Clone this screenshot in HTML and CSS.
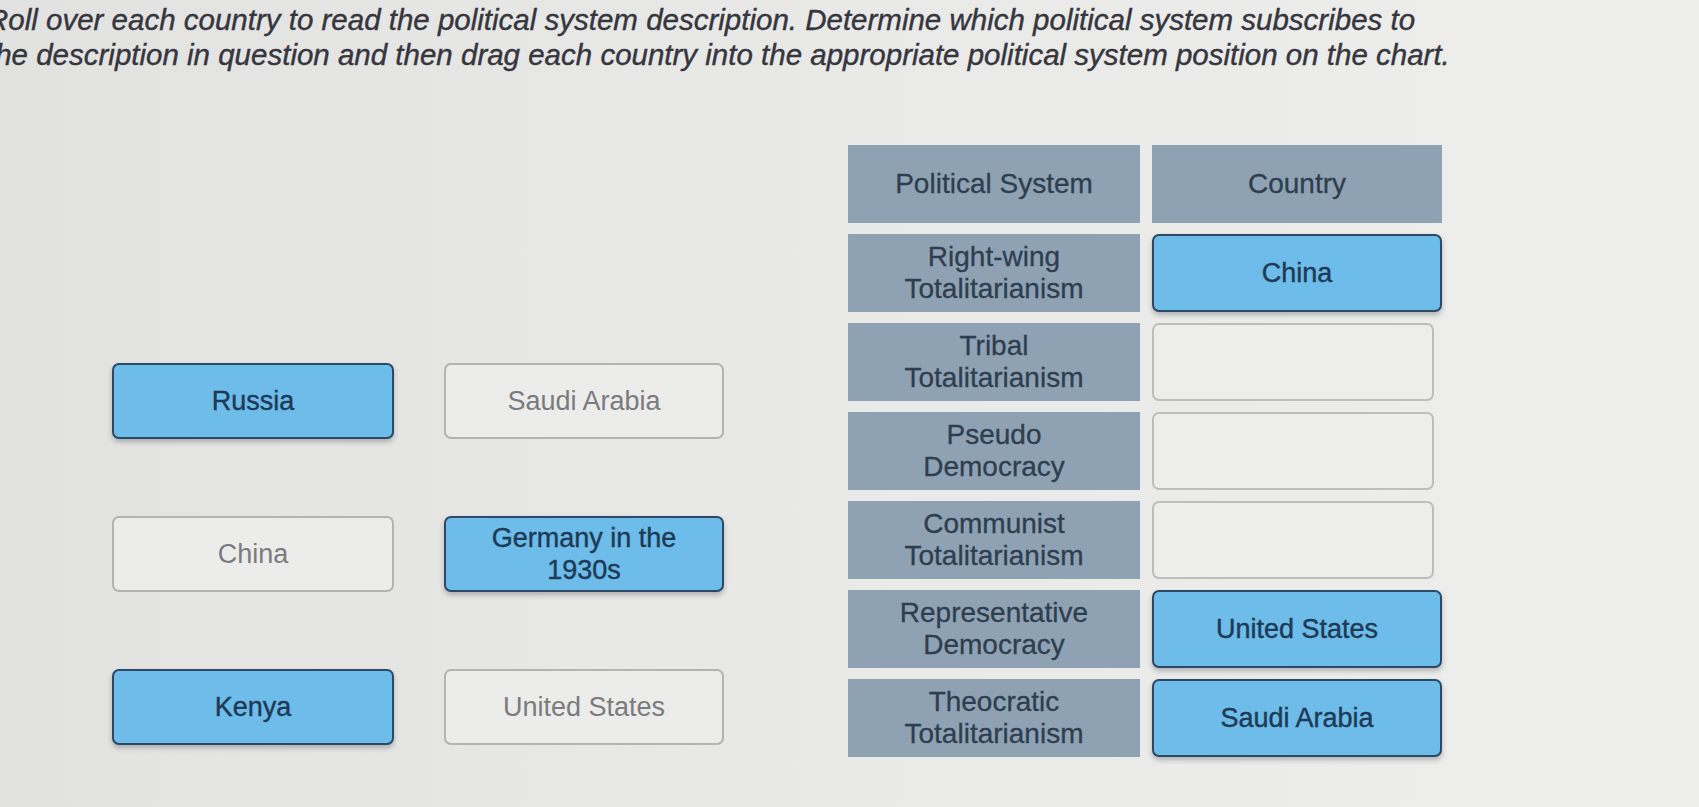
FILE: index.html
```html
<!DOCTYPE html>
<html lang="en">
<head>
<meta charset="UTF-8">
<meta name="viewport" content="width=device-width, initial-scale=1.0">
<title>Political Systems</title>
<link rel="stylesheet" href="styles.css">
</head>
<body>
<div class="page">
  <p class="prompt">
    Roll over each country to read the political system description. Determine which political system subscribes to<br>
    the description in question and then drag each country into the appropriate political system position on the chart.
  </p>

  <div class="activity">
    <!-- countries still to be dragged -->
    <div class="bank">
      <div class="tile placed">Russia</div>
      <div class="tile empty">Saudi Arabia</div>
      <div class="tile empty">China</div>
      <div class="tile placed">Germany in the<br>1930s</div>
      <div class="tile placed">Kenya</div>
      <div class="tile empty">United States</div>
    </div>

    <!-- chart: system on the left, drop target on the right -->
    <div class="chart">
      <div class="cell head">Political System</div>
      <div class="cell head">Country</div>

      <div class="cell">Right-wing<br>Totalitarianism</div>
      <div class="tile placed">China</div>

      <div class="cell">Tribal<br>Totalitarianism</div>
      <div class="tile slot"></div>

      <div class="cell">Pseudo<br>Democracy</div>
      <div class="tile slot"></div>

      <div class="cell">Communist<br>Totalitarianism</div>
      <div class="tile slot"></div>

      <div class="cell">Representative<br>Democracy</div>
      <div class="tile placed">United States</div>

      <div class="cell">Theocratic<br>Totalitarianism</div>
      <div class="tile placed">Saudi Arabia</div>
    </div>
  </div>
</div>
</body>
</html>
```

FILE: styles.css
```css
body {
  margin: 0;
  padding: 0;
  overflow: hidden;
  font-family: "Liberation Sans", Arial, sans-serif;
  background: linear-gradient(90deg, #e2e2e0 0%, #e9e9e7 50%, #eeeeec 100%);
}
.page {
  width: 1699px;
  height: 807px;
}
.prompt {
  margin: 0 0 0 -13px;
  padding-top: 2px;
  font-size: 29.5px;
  font-style: italic;
  line-height: 35px;
  color: #36363e;
  -webkit-text-stroke: 0.4px #36363e;
  white-space: nowrap;
}
.activity {
  display: flex;
  align-items: flex-start;
  margin-top: 73px;
}
.bank {
  display: grid;
  grid-template-columns: 282px 280px;
  grid-auto-rows: 76px;
  column-gap: 50px;
  row-gap: 77px;
  margin-left: 112px;
  margin-top: 218px;
}
.chart {
  display: grid;
  grid-template-columns: 292px 290px;
  grid-auto-rows: 78px;
  column-gap: 12px;
  row-gap: 11px;
  margin-left: 124px;
}
.cell {
  display: flex;
  align-items: center;
  justify-content: center;
  text-align: center;
  font-size: 28px;
  line-height: 32px;
  color: #2f3e4e;
  -webkit-text-stroke: 0.3px #2f3e4e;
  background: #8ea2b4;
}
.tile {
  display: flex;
  align-items: center;
  justify-content: center;
  text-align: center;
  font-size: 27px;
  line-height: 32px;
  border-radius: 7px;
  box-sizing: border-box;
}
.placed {
  color: #1e3a56;
  -webkit-text-stroke: 0.4px #1e3a56;
  background: #6dbce9;
  border: 2px solid #2c4966;
  box-shadow: 0 3px 5px rgba(40, 50, 60, 0.3);
}
.empty {
  color: #7b7b7e;
  background: #ececea;
  border: 2px solid #b3b3b3;
}
.slot {
  background: #ededeb;
  border: 2px solid #bdbdbd;
  margin-right: 8px;
}
```
